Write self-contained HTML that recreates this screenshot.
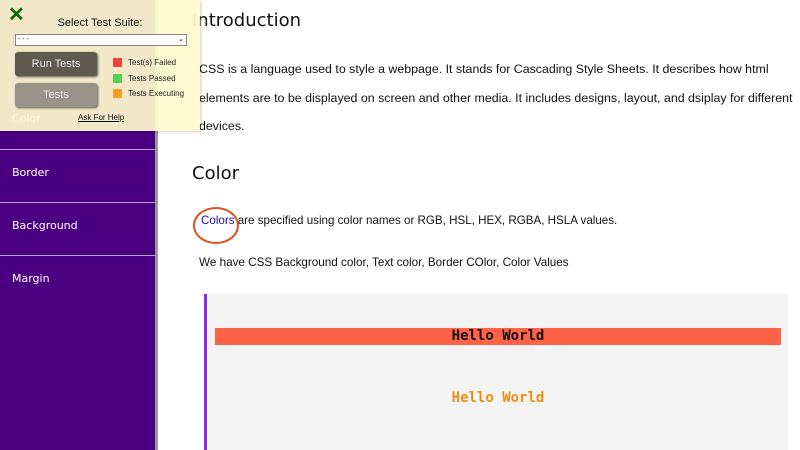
<!DOCTYPE html>
<html><head><style>
body{margin:0;width:800px;height:450px;overflow:hidden;background:#fff;font-family:"Liberation Sans",sans-serif;position:relative}
.side{position:absolute;left:0;top:0;width:155px;height:450px;background:#4b0082;border-right:3px solid #9a9a9a}
.item{position:absolute;left:0;width:155px;color:#fff;font-size:11px;padding-left:12px;box-sizing:border-box;font-family:"DejaVu Sans",sans-serif}
.line{position:absolute;left:0;width:155px;height:1px;background:#b9a3cf}
.main{position:absolute;left:192px;top:0;color:#111}
h2{font-weight:normal;font-size:18px;margin:0;position:absolute;white-space:nowrap;font-family:"DejaVu Sans",sans-serif}
p{position:absolute;margin:0;font-size:12.4px;white-space:nowrap}
.panel{position:absolute;left:0;top:0;width:200px;height:131px;background:rgba(255,250,205,0.93);box-shadow:1px 1px 3px rgba(0,0,0,.2);font-family:"Liberation Sans",sans-serif}
.btn{position:absolute;left:15px;width:82px;height:24px;border-radius:3px;color:#eee;font-size:11px;text-align:center;line-height:24px;box-shadow:1px 1px 2px #555}
.lg{position:absolute;left:113px;width:9px;height:9px}
.lt{position:absolute;left:128px;font-size:8px;color:#222}
</style></head><body>
<div class="side">
<div class="item" style="top:112px;color:#eee">Color</div>
<div class="line" style="top:149px"></div>
<div class="item" style="top:166px">Border</div>
<div class="line" style="top:202px"></div>
<div class="item" style="top:219px">Background</div>
<div class="line" style="top:255px"></div>
<div class="item" style="top:272px">Margin</div>
</div>
<div class="main">
<h2 style="top:10px;left:0">Introduction</h2>
<p style="top:62px;left:7px">CSS is a language used to style a webpage. It stands for Cascading Style Sheets. It describes how html</p>
<p style="top:91px;left:7px">elements are to be displayed on screen and other media. It includes designs, layout, and dsiplay for different</p>
<p style="top:119px;left:7px">devices.</p>
<h2 style="top:163px;left:0">Color</h2>
<p style="top:214px;left:9px;font-size:11.6px"><span style="color:#1a0dab">Colors</span> are specified using color names or RGB, HSL, HEX, RGBA, HSLA values.</p>
<div style="position:absolute;left:1px;top:207px;width:46px;height:37px;border:2px solid #e0521e;border-radius:50%;box-sizing:border-box"></div>
<p style="top:256px;left:7px;font-size:11.7px">We have CSS Background color, Text color, Border COlor, Color Values</p>
</div>
<div style="position:absolute;left:204px;top:294px;width:581px;height:156px;background:#f4f4f4;border-left:3px solid #8a2be2"></div>
<div style="position:absolute;left:215px;top:328px;width:566px;height:17px;background:#ff6347;text-align:center;font:bold 14px 'DejaVu Sans Mono',monospace;line-height:17px;color:#111">Hello World</div>
<div style="position:absolute;left:215px;top:390px;width:566px;text-align:center;font:bold 14px 'DejaVu Sans Mono',monospace;color:#ee8c12">Hello World</div>
<div class="panel">
<div style="position:absolute;left:8px;top:2px;font:bold 20px 'Liberation Sans';color:#0a6a0a">✕</div>
<div style="position:absolute;left:0;width:200px;top:17px;text-align:center;font-size:11px;color:#111">Select Test Suite:</div>
<div style="position:absolute;left:15px;top:34px;width:168px;height:10px;background:#fff;border:1px solid #888;font-size:7px;line-height:10px;padding-left:2px">- - -<span style="position:absolute;right:2px;font-size:7px">⌄</span></div>
<div class="btn" style="top:52px;background:#5e5a4e">Run Tests</div>
<div class="btn" style="top:83px;background:#999487">Tests</div>
<div class="lg" style="top:58px;background:#f04040"></div><div class="lt" style="top:58px">Test(s) Failed</div>
<div class="lg" style="top:74px;background:#55d055"></div><div class="lt" style="top:74px">Tests Passed</div>
<div class="lg" style="top:89px;background:#f5a020"></div><div class="lt" style="top:89px">Tests Executing</div>
<div style="position:absolute;left:78px;top:113px;font-size:8px;text-decoration:underline;color:#111">Ask For Help</div>
</div>
</body></html>
